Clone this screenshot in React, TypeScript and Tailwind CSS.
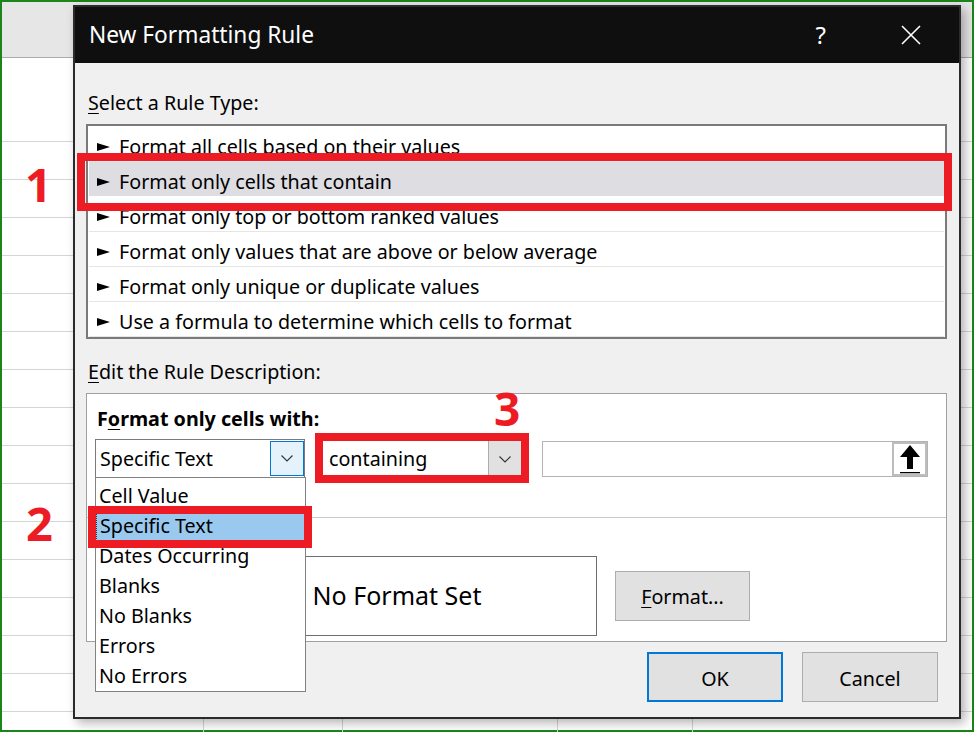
const rules = [
  'Format all cells based on their values',
  'Format only cells that contain',
  'Format only top or bottom ranked values',
  'Format only values that are above or below average',
  'Format only unique or duplicate values',
  'Use a formula to determine which cells to format',
];

const options = ['Cell Value', 'Specific Text', 'Dates Occurring', 'Blanks', 'No Blanks', 'Errors', 'No Errors'];

const Chevron = () => (
  <svg width="12" height="7" viewBox="0 0 12 7" fill="none">
    <path d="M0.5 0.5L6 6L11.5 0.5" stroke="#333" strokeWidth="1.1" />
  </svg>
);

const Pointer = () => (
  <svg width="13" height="8" viewBox="0 0 13 8">
    <polygon points="0,0 13,4 0,8" fill="#000" />
  </svg>
);

const SheetRow = ({ tall }: { tall?: boolean }) => (
  <div className={`flex shrink-0 border-b border-[#d4d4d4] ${tall ? 'h-[84px]' : 'h-[38px]'}`}>
    <div className="w-[202px] border-r border-[#d4d4d4]"></div>
    <div className="w-[139px] border-r border-[#d4d4d4]"></div>
    <div className="w-[215px] border-r border-[#d4d4d4]"></div>
    <div className="w-[135px] border-r border-[#d4d4d4]"></div>
    <div className="flex-1"></div>
  </div>
);

export default function App() {
  return (
    <div className="relative w-[974px] h-[732px] overflow-hidden bg-white font-['Noto_Sans',sans-serif] text-black">
      {/* spreadsheet behind the dialog */}
      <div className="absolute inset-0 flex flex-col border-2 border-[#1a851a]">
        <div className="h-[56px] shrink-0 bg-[#e6e6e6] border-b border-[#ababab]"></div>
        <SheetRow tall />
        {[...Array(16)].map((_, i) => (
          <SheetRow key={i} />
        ))}
      </div>

      {/* dialog */}
      <div className="absolute left-[73px] top-[5px] w-[888px] h-[714px] border-2 border-[#2b2b2b] bg-[#f0f0f0] shadow-[4px_4px_10px_rgba(0,0,0,0.3)] flex flex-col">
        <div className="h-[56px] shrink-0 bg-[#0f0f0f] flex items-center pl-[14px] pr-[38px] text-white">
          <span className="text-[22.7px] flex-1">New Formatting Rule</span>
          <span className="text-[24px] leading-none">?</span>
          <svg className="ml-[75px]" width="20" height="20" viewBox="0 0 20 20">
            <path d="M1 1L19 19M19 1L1 19" stroke="#fff" strokeWidth="1.6" />
          </svg>
        </div>

        <div className="flex-1 flex flex-col pl-[11px] pr-[12px] text-[19.7px]">
          <div className="mt-[26px] h-[28px] leading-[28px] pl-[2px]">
            <span className="underline underline-offset-[3px]">S</span>elect a Rule Type:
          </div>

          <div className="mt-[7px] h-[215px] shrink-0 border-2 border-[#7a7a7a] bg-white pt-[1px] px-[1px]">
            {rules.map((r, i) => (
              <div
                key={r}
                className={`h-[35px] flex items-center gap-[9px] pl-[8px] pt-[5px] border-b ${
                  i === 1 ? 'bg-[#dedde2] border-white' : 'border-[#e6e6e6]'
                }`}
              >
                <Pointer />
                <span className="leading-none">{r}</span>
              </div>
            ))}
          </div>

          <div className="mt-[19px] h-[28px] leading-[28px] pl-[2px]">
            <span className="underline underline-offset-[3px]">E</span>dit the Rule Description:
          </div>

          <div className="mt-[7px] h-[249px] shrink-0 border border-[#a0a0a0] bg-white pt-[11px] pl-[8px] flex flex-col">
            <div className="pl-[2px] h-[28px] leading-[28px] font-bold">
              F<span className="underline underline-offset-[3px]">o</span>rmat only cells with:
            </div>

            <div className="mt-[6px] flex items-start">
              <div className="relative w-[210px] h-[39px] border border-[#7a7a7a] flex items-center">
                <span className="pl-[4px] flex-1">Specific Text</span>
                <div className="w-[34px] h-[35px] border border-[#0078d7] bg-[#e5f1fb] flex items-center justify-center">
                  <Chevron />
                </div>
                <div className="absolute left-[-1px] top-[37px] w-[211px] h-[215px] border border-[#828282] bg-white pt-[3px] z-10">
                  {options.map((o, i) => (
                    <div
                      key={o}
                      className={`h-[30px] flex items-center pl-[3px] ${
                        i === 1 ? 'bg-[#99c9ef] border border-dotted border-[#333]' : ''
                      }`}
                    >
                      {o}
                    </div>
                  ))}
                </div>
              </div>

              <div className="ml-[17px] mt-[1px] w-[200px] h-[38px] border border-[#adadad] bg-white flex items-center">
                <span className="pl-[6px] flex-1">containing</span>
                <div className="w-[33px] h-full border-l border-[#adadad] bg-[#e1e1e1] flex items-center justify-center">
                  <Chevron />
                </div>
              </div>

              <div className="ml-[20px] mt-[2px] w-[386px] h-[36px] border border-[#b4b4b4] bg-white flex justify-end">
                <div className="w-[35px] h-full border-2 border-[#bdbdbd] bg-white flex items-center justify-center">
                  <svg width="20" height="30" viewBox="0 0 20 30">
                    <polygon points="10,1 20,13 13,13 13,25 7,25 7,13 0,13" fill="#000" />
                    <rect x="0" y="28" width="20" height="1.3" fill="#000" />
                  </svg>
                </div>
              </div>
            </div>

            <div className="mt-[39px] -ml-[8px] border-t border-[#c8c8c8]"></div>

            <div className="mt-[38px] flex items-center">
              <div className="ml-[102px] w-[400px] h-[80px] border border-[#6d6d6d] flex items-center justify-center text-[25px]">
                No Format Set
              </div>
              <div className="ml-[18px] w-[135px] h-[50px] bg-[#e1e1e1] border border-[#adadad] flex items-center justify-center pt-[2px]">
                <span>
                  <span className="underline underline-offset-[3px]">F</span>ormat...
                </span>
              </div>
            </div>
          </div>

          <div className="mt-[10px] flex justify-end gap-[19px] pr-[9px]">
            <div className="w-[136px] h-[50px] bg-[#e1e1e1] border-2 border-[#0078d7] flex items-center justify-center pt-[3px]">OK</div>
            <div className="w-[136px] h-[50px] bg-[#e1e1e1] border border-[#adadad] flex items-center justify-center pt-[3px]">Cancel</div>
          </div>
        </div>
      </div>

      {/* annotations */}
      <div className="absolute left-[77px] top-[153px] w-[875px] h-[58px] border-[8px] border-[#ed1c24]"></div>
      <div className="absolute left-[88px] top-[506px] w-[224px] h-[42px] border-[8px] border-[#ed1c24] z-20"></div>
      <div className="absolute left-[315px] top-[433px] w-[214px] h-[50px] border-[8px] border-[#ed1c24]"></div>

      <div className="absolute left-[25px] top-[161px] text-[47px] leading-none font-bold text-[#ed1c24]">1</div>
      <div className="absolute left-[26px] top-[500px] text-[47px] leading-none font-bold text-[#ed1c24]">2</div>
      <div className="absolute left-[494px] top-[385px] text-[46px] leading-none font-bold text-[#ed1c24]">3</div>
    </div>
  );
}
